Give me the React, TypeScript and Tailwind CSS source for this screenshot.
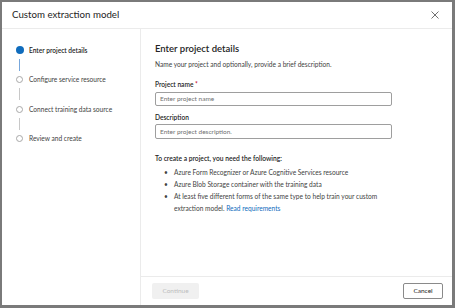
import React from "react";

const font = { fontFamily: 'Lato, "Open Sans", sans-serif' };

function StepDot({ active }: { active?: boolean }) {
  return active ? (
    <div className="w-[8px] h-[8px] rounded-full bg-[#0f6cbd]" />
  ) : (
    <div className="w-[7px] h-[7px] rounded-full border border-[#a8a8a8] bg-white" />
  );
}

export default function App() {
  const steps = [
    "Enter project details",
    "Configure service resource",
    "Connect training data source",
    "Review and create",
  ];
  return (
    <div
      className="w-[455px] h-[308px] bg-[#7a7a7a] pt-[2px] pl-[2px] pr-[3px] pb-[3px] text-[#242424]"
      style={font}
    >
      <div className="w-full h-full bg-white flex flex-col">
        <div className="h-[27px] shrink-0 border-b border-[#ebebeb] flex items-center justify-between pl-[10px] pr-[13px]">
          <div className="text-[9.7px] leading-none text-[#242424]">Custom extraction model</div>
          <svg width="8" height="8" viewBox="0 0 8 8" className="text-[#616161]">
            <path d="M0.5 0.5 L7.5 7.5 M7.5 0.5 L0.5 7.5" stroke="currentColor" strokeWidth="0.9" />
          </svg>
        </div>
        <div className="flex-1 flex min-h-0">
          <div className="w-[139px] shrink-0 border-r border-[#ebebeb] pt-[15px] pl-[13px]">
            {steps.map((s, i) => (
              <div key={s} className="flex flex-col">
                <div className="flex items-center h-[12px]">
                  <div className="w-[9px] flex justify-center">
                    <StepDot active={i === 0} />
                  </div>
                  <span
                    className={
                      "ml-[5px] text-[6.6px] leading-none " +
                      (i === 0 ? "font-semibold text-[#242424]" : "text-[#424242]")
                    }
                  >
                    {s}
                  </span>
                </div>
                {i < steps.length - 1 && (
                  <div className="w-[9px] h-[17.6px] flex items-center justify-center">
                    <div
                      className={
                        "w-[1.5px] h-[12px] " + (i === 0 ? "bg-[#77a7dc]" : "bg-[#c8c8c8]")
                      }
                    />
                  </div>
                )}
              </div>
            ))}
          </div>
          <div className="flex-1 flex flex-col min-w-0">
            <div className="flex-1 pl-[14px] pt-[15px]">
              <div className="text-[9.5px] font-semibold leading-none text-[#242424]">
                Enter project details
              </div>
              <div className="mt-[7px] text-[6.6px] leading-none text-[#424242]">
                Name your project and optionally, provide a brief description.
              </div>
              <div className="mt-[14px] text-[6.6px] font-semibold leading-none">
                Project name <span className="text-[#c50f1f]">*</span>
              </div>
              <div className="mt-[4px] w-[237px] h-[14px] border border-[#9e9e9e] rounded-[2px] flex items-center pl-[4px] text-[6.5px] text-[#707070]">
                Enter project name
              </div>
              <div className="mt-[8px] text-[6.6px] font-semibold leading-none">Description</div>
              <div className="mt-[4px] w-[237px] h-[15px] border border-[#9e9e9e] rounded-[2px] flex items-center pl-[4px] text-[6.5px] text-[#707070]">
                Enter project description.
              </div>
              <div className="mt-[16px] text-[6.7px] font-semibold leading-none">
                To create a project, you need the following:
              </div>
              <ul className="mt-[4px] pl-[9px] text-[6.6px] leading-[12px] text-[#424242]">
                {[
                  "Azure Form Recognizer or Azure Cognitive Services resource",
                  "Azure Blob Storage container with the training data",
                ].map((t) => (
                  <li key={t} className="flex">
                    <span className="w-[10px] shrink-0">•</span>
                    <span>{t}</span>
                  </li>
                ))}
                <li className="flex">
                  <span className="w-[10px] shrink-0">•</span>
                  <span className="w-[212px]">
                    At least five different forms of the same type to help train your custom
                    extraction model. <span className="text-[#0f6cbd]">Read requirements</span>
                  </span>
                </li>
              </ul>
            </div>
            <div className="h-[29px] shrink-0 border-t border-[#ebebeb] flex items-center justify-between pl-[11px] pr-[9px]">
              <div className="w-[47px] h-[16px] rounded-[2px] bg-[#f0f0f0] text-[6.5px] text-[#bdbdbd] flex items-center justify-center">
                Continue
              </div>
              <div className="w-[40px] h-[16px] rounded-[2px] border border-[#8a8a8a] text-[6.5px] text-[#242424] flex items-center justify-center">
                Cancel
              </div>
            </div>
          </div>
        </div>
      </div>
    </div>
  );
}
